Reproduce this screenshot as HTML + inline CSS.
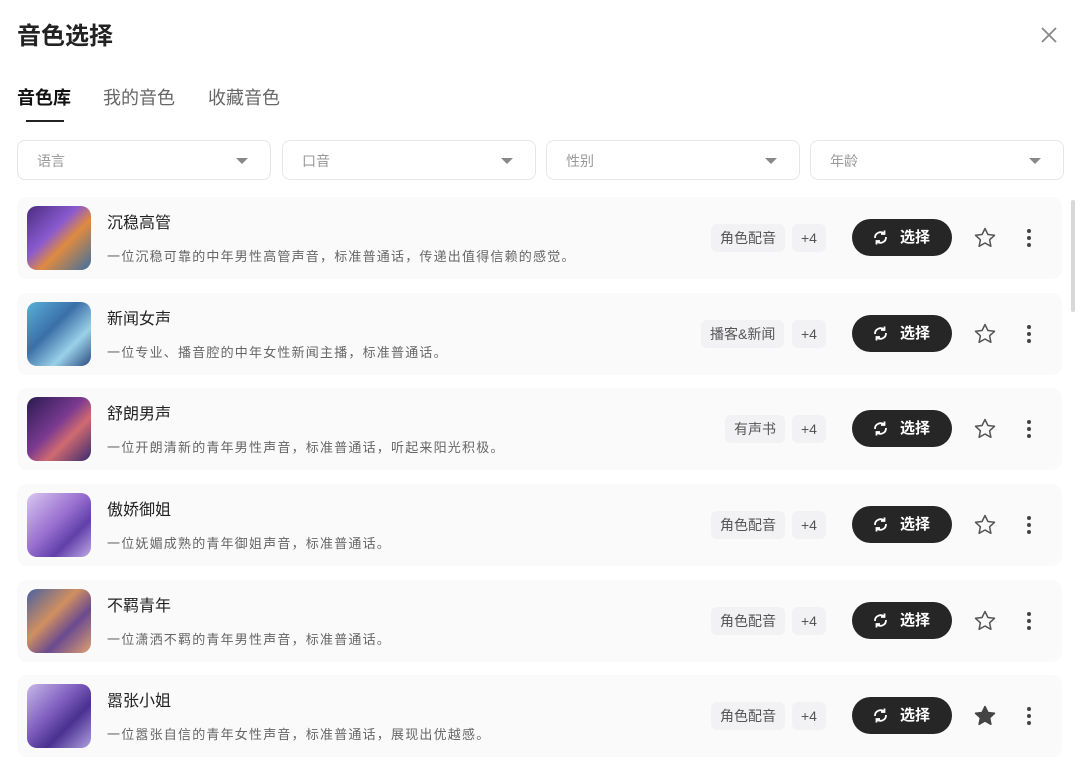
<!DOCTYPE html><html><head><meta charset="utf-8"><style>
*{margin:0;padding:0;box-sizing:border-box}
body{width:1080px;height:767px;overflow:hidden;background:#fff;font-family:"Liberation Sans","Noto Sans CJK SC",sans-serif;color:#222;position:relative}
.a{position:absolute}
.h{left:17px;top:16px;font-size:24px;font-weight:bold}
.tab{top:84px;font-size:18px;color:#666}
.sel{border:1px solid #e6e6e6;border-radius:8px;height:40px;top:140px;width:254px;color:#999;font-size:14px;padding:10px 0 0 19px}
.sel:after{content:"";position:absolute;right:22px;top:17px;border:6px solid transparent;border-top:6px solid #888;border-bottom:0}
.card{left:17px;width:1045px;height:82px;background:#fafafa;border-radius:10px}
.th{left:10px;top:9px;width:64px;height:64px;border-radius:10px}
.t{left:90px;top:12px;font-size:16px;color:#222}
.d{left:90px;top:49px;font-size:13px;letter-spacing:1.2px;color:#666}
.tag{top:27px;height:28px;background:#f2f2f4;border-radius:6px;font-size:14px;color:#555;line-height:28px;padding:0 9px}
.btn{left:835px;top:22px;width:100px;height:37px;border-radius:19px;background:#262626;color:#fff;font-size:15px;font-weight:bold;line-height:37px;padding-left:48px}
.btn svg{position:absolute;left:20px;top:10px}
.star{left:956px;top:29px}
.dots{left:1010px;top:32px;width:4px}
.dots i{display:block;width:4px;height:4px;border-radius:2px;background:#444;margin-bottom:3px}
</style></head><body>
<div class="a h">音色选择</div>
<svg class="a" style="left:1040px;top:26px" width="18" height="18" viewBox="0 0 18 18"><path d="M2 2L16 16M16 2L2 16" stroke="#888" stroke-width="1.8"/></svg>
<div class="a tab" style="left:17px;color:#111;font-weight:bold">音色库</div>
<div class="a" style="left:26px;top:120px;width:38px;height:2px;background:#222"></div>
<div class="a tab" style="left:103px">我的音色</div>
<div class="a tab" style="left:208px">收藏音色</div>
<div class="a sel" style="left:17px">语言</div>
<div class="a sel" style="left:282px">口音</div>
<div class="a sel" style="left:546px">性别</div>
<div class="a sel" style="left:810px">年龄</div>
<div class="a" style="left:1071px;top:200px;width:4px;height:112px;background:#d8d8d8;border-radius:2px"></div>
<div class="a card" style="top:197px"><div class="a th" style="background:linear-gradient(135deg,#4a2c80,#8a5ad0 40%,#e08a40 60%,#3d6fa0)"></div><div class="a t">沉稳高管</div><div class="a d">一位沉稳可靠的中年男性高管声音，标准普通话，传递出值得信赖的感觉。</div><div class="a tag" style="left:694px">角色配音</div><div class="a tag" style="left:775px">+4</div><div class="a btn"><svg width="17" height="17" viewBox="0 0 17 17" fill="none" stroke="#fff" stroke-width="1.8"><path d="M3 9a5.5 5.5 0 0 1 9.5-4M14 8a5.5 5.5 0 0 1-9.5 4"/><path d="M12.5 1.5v3.5h-3.5M4.5 15.5v-3.5h3.5"/></svg>选择</div><svg class="a star" width="24" height="24" viewBox="0 0 24 24"><path d="M12 2.5l2.9 6 6.6.8-4.9 4.5 1.3 6.5L12 17l-5.9 3.3 1.3-6.5-4.9-4.5 6.6-.8z" fill="none" stroke="#555" stroke-width="1.5" stroke-linejoin="round"/></svg><div class="a dots"><i></i><i></i><i></i></div></div>
<div class="a card" style="top:293px"><div class="a th" style="background:linear-gradient(135deg,#5ab0d8,#3a6fa8 40%,#9ad0e8 70%,#2a4a80)"></div><div class="a t">新闻女声</div><div class="a d">一位专业、播音腔的中年女性新闻主播，标准普通话。</div><div class="a tag" style="left:684px">播客&amp;新闻</div><div class="a tag" style="left:775px">+4</div><div class="a btn"><svg width="17" height="17" viewBox="0 0 17 17" fill="none" stroke="#fff" stroke-width="1.8"><path d="M3 9a5.5 5.5 0 0 1 9.5-4M14 8a5.5 5.5 0 0 1-9.5 4"/><path d="M12.5 1.5v3.5h-3.5M4.5 15.5v-3.5h3.5"/></svg>选择</div><svg class="a star" width="24" height="24" viewBox="0 0 24 24"><path d="M12 2.5l2.9 6 6.6.8-4.9 4.5 1.3 6.5L12 17l-5.9 3.3 1.3-6.5-4.9-4.5 6.6-.8z" fill="none" stroke="#555" stroke-width="1.5" stroke-linejoin="round"/></svg><div class="a dots"><i></i><i></i><i></i></div></div>
<div class="a card" style="top:388px"><div class="a th" style="background:linear-gradient(135deg,#2a1a50,#7a3a90 45%,#d06a70 65%,#3a2a70)"></div><div class="a t">舒朗男声</div><div class="a d">一位开朗清新的青年男性声音，标准普通话，听起来阳光积极。</div><div class="a tag" style="left:708px">有声书</div><div class="a tag" style="left:775px">+4</div><div class="a btn"><svg width="17" height="17" viewBox="0 0 17 17" fill="none" stroke="#fff" stroke-width="1.8"><path d="M3 9a5.5 5.5 0 0 1 9.5-4M14 8a5.5 5.5 0 0 1-9.5 4"/><path d="M12.5 1.5v3.5h-3.5M4.5 15.5v-3.5h3.5"/></svg>选择</div><svg class="a star" width="24" height="24" viewBox="0 0 24 24"><path d="M12 2.5l2.9 6 6.6.8-4.9 4.5 1.3 6.5L12 17l-5.9 3.3 1.3-6.5-4.9-4.5 6.6-.8z" fill="none" stroke="#555" stroke-width="1.5" stroke-linejoin="round"/></svg><div class="a dots"><i></i><i></i><i></i></div></div>
<div class="a card" style="top:484px"><div class="a th" style="background:linear-gradient(135deg,#d8c8f0,#9a70d0 45%,#6040a8 70%,#c0a8e8)"></div><div class="a t">傲娇御姐</div><div class="a d">一位妩媚成熟的青年御姐声音，标准普通话。</div><div class="a tag" style="left:694px">角色配音</div><div class="a tag" style="left:775px">+4</div><div class="a btn"><svg width="17" height="17" viewBox="0 0 17 17" fill="none" stroke="#fff" stroke-width="1.8"><path d="M3 9a5.5 5.5 0 0 1 9.5-4M14 8a5.5 5.5 0 0 1-9.5 4"/><path d="M12.5 1.5v3.5h-3.5M4.5 15.5v-3.5h3.5"/></svg>选择</div><svg class="a star" width="24" height="24" viewBox="0 0 24 24"><path d="M12 2.5l2.9 6 6.6.8-4.9 4.5 1.3 6.5L12 17l-5.9 3.3 1.3-6.5-4.9-4.5 6.6-.8z" fill="none" stroke="#555" stroke-width="1.5" stroke-linejoin="round"/></svg><div class="a dots"><i></i><i></i><i></i></div></div>
<div class="a card" style="top:580px"><div class="a th" style="background:linear-gradient(135deg,#4a60a0,#d09060 40%,#6a4a90 65%,#e0a070)"></div><div class="a t">不羁青年</div><div class="a d">一位潇洒不羁的青年男性声音，标准普通话。</div><div class="a tag" style="left:694px">角色配音</div><div class="a tag" style="left:775px">+4</div><div class="a btn"><svg width="17" height="17" viewBox="0 0 17 17" fill="none" stroke="#fff" stroke-width="1.8"><path d="M3 9a5.5 5.5 0 0 1 9.5-4M14 8a5.5 5.5 0 0 1-9.5 4"/><path d="M12.5 1.5v3.5h-3.5M4.5 15.5v-3.5h3.5"/></svg>选择</div><svg class="a star" width="24" height="24" viewBox="0 0 24 24"><path d="M12 2.5l2.9 6 6.6.8-4.9 4.5 1.3 6.5L12 17l-5.9 3.3 1.3-6.5-4.9-4.5 6.6-.8z" fill="none" stroke="#555" stroke-width="1.5" stroke-linejoin="round"/></svg><div class="a dots"><i></i><i></i><i></i></div></div>
<div class="a card" style="top:675px"><div class="a th" style="background:linear-gradient(135deg,#c8b8e8,#8060c0 40%,#4a3090 65%,#b0a0e0)"></div><div class="a t">嚣张小姐</div><div class="a d">一位嚣张自信的青年女性声音，标准普通话，展现出优越感。</div><div class="a tag" style="left:694px">角色配音</div><div class="a tag" style="left:775px">+4</div><div class="a btn"><svg width="17" height="17" viewBox="0 0 17 17" fill="none" stroke="#fff" stroke-width="1.8"><path d="M3 9a5.5 5.5 0 0 1 9.5-4M14 8a5.5 5.5 0 0 1-9.5 4"/><path d="M12.5 1.5v3.5h-3.5M4.5 15.5v-3.5h3.5"/></svg>选择</div><svg class="a star" width="24" height="24" viewBox="0 0 24 24"><path d="M12 2.5l2.9 6 6.6.8-4.9 4.5 1.3 6.5L12 17l-5.9 3.3 1.3-6.5-4.9-4.5 6.6-.8z" fill="#444" stroke="#444" stroke-width="1.5" stroke-linejoin="round"/></svg><div class="a dots"><i></i><i></i><i></i></div></div>
</body></html>
